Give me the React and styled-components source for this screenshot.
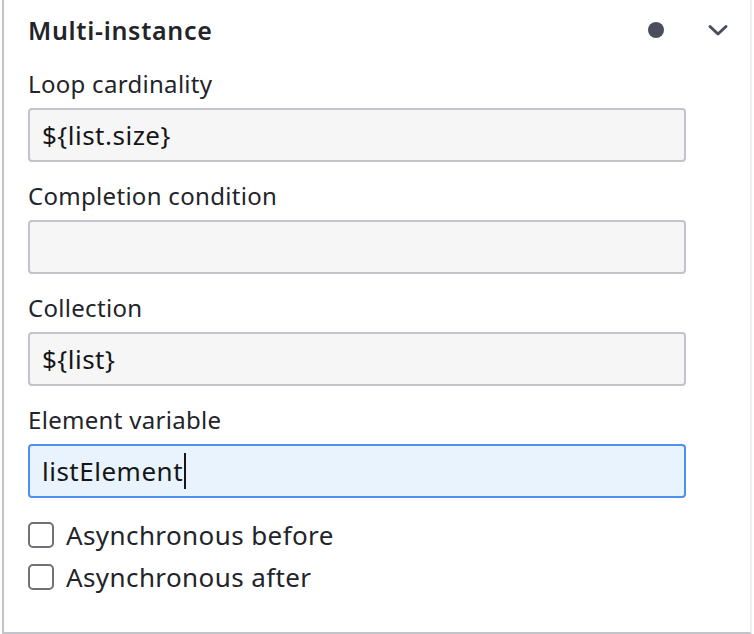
import React from 'react'
import styled, { createGlobalStyle } from 'styled-components'

const GlobalStyle = createGlobalStyle`
  html, body {
    margin: 0;
    padding: 0;
    background: #ffffff;
  }
  body {
    font-family: "Noto Sans", "Open Sans", sans-serif;
    color: #22242a;
  }
`

function Chevron() {
  return (
    <svg width="26" height="26" viewBox="0 0 26 26">
      <path d="M5 9.5 L13 17 L21 9.5" fill="none" stroke="#4b4e5c" strokeWidth="3" strokeLinecap="round" strokeLinejoin="round" />
    </svg>
  )
}

function Field({ label, value, focused }) {
  return (
    <Group>
      <Label>{label}</Label>
      <Input $focused={focused}>
        {value}
        {focused && <Caret />}
      </Input>
    </Group>
  )
}

function Check({ label }) {
  return (
    <CheckRow>
      <Box />
      <CheckText>{label}</CheckText>
    </CheckRow>
  )
}

export default function App() {
  return (
    <>
      <GlobalStyle />
      <Panel>
        <Header>
          <Title>Multi-instance</Title>
          <HeaderIcons>
            <Dot />
            <Chevron />
          </HeaderIcons>
        </Header>
        <Fields>
          <Field label="Loop cardinality" value="${list.size}" />
          <Field label="Completion condition" value="" />
          <Field label="Collection" value="${list}" />
          <Field label="Element variable" value="listElement" focused />
        </Fields>
        <Checks>
          <Check label="Asynchronous before" />
          <Check label="Asynchronous after" />
        </Checks>
      </Panel>
    </>
  )
}

const Panel = styled.div`
  box-sizing: border-box;
  margin-left: 2px;
  width: 750px;
  height: 634px;
  border-left: 2px solid #c2c3cb;
  border-right: 2px solid #efeff1;
  border-bottom: 2px solid #c2c3cb;
  padding: 0 64px 0 24px;
  display: flex;
  flex-direction: column;
`

const Header = styled.div`
  height: 60px;
  display: flex;
  align-items: center;
  justify-content: space-between;
  margin-right: -45px;
`

const Title = styled.div`
  font-size: 25px;
  font-weight: 600;
  color: #22242a;
  letter-spacing: 0.7px;
`

const HeaderIcons = styled.div`
  display: flex;
  align-items: center;
  gap: 41px;
`

const Dot = styled.span`
  width: 16px;
  height: 16px;
  border-radius: 50%;
  background: #4b4e5c;
`

const Fields = styled.div`
  display: flex;
  flex-direction: column;
  gap: 10px;
`

const Group = styled.div`
  display: flex;
  flex-direction: column;
`

const Label = styled.div`
  font-size: 24px;
  line-height: 48px;
  height: 48px;
  letter-spacing: 0.3px;
  color: #22242a;
`

const Input = styled.div`
  box-sizing: border-box;
  height: 54px;
  border: 2px solid ${p => (p.$focused ? '#4d90ed' : '#c2c3cb')};
  background: ${p => (p.$focused ? '#e8f3fe' : '#f6f6f7')};
  border-radius: 4px;
  padding: 0 12px;
  display: flex;
  align-items: center;
  font-size: 26px;
  letter-spacing: 0.5px;
  color: #161616;
`

const Caret = styled.span`
  width: 2px;
  height: 36px;
  background: #161616;
  margin-left: 1px;
`

const Checks = styled.div`
  display: flex;
  flex-direction: column;
  gap: 16px;
  margin-top: 24px;
`

const CheckRow = styled.label`
  display: flex;
  align-items: center;
  gap: 12px;
  height: 26px;
`

const Box = styled.span`
  box-sizing: border-box;
  width: 26px;
  height: 26px;
  border: 2px solid #6f7179;
  border-radius: 5px;
  background: #fff;
`

const CheckText = styled.span`
  font-size: 26px;
  letter-spacing: 0.4px;
  color: #22242a;
`
